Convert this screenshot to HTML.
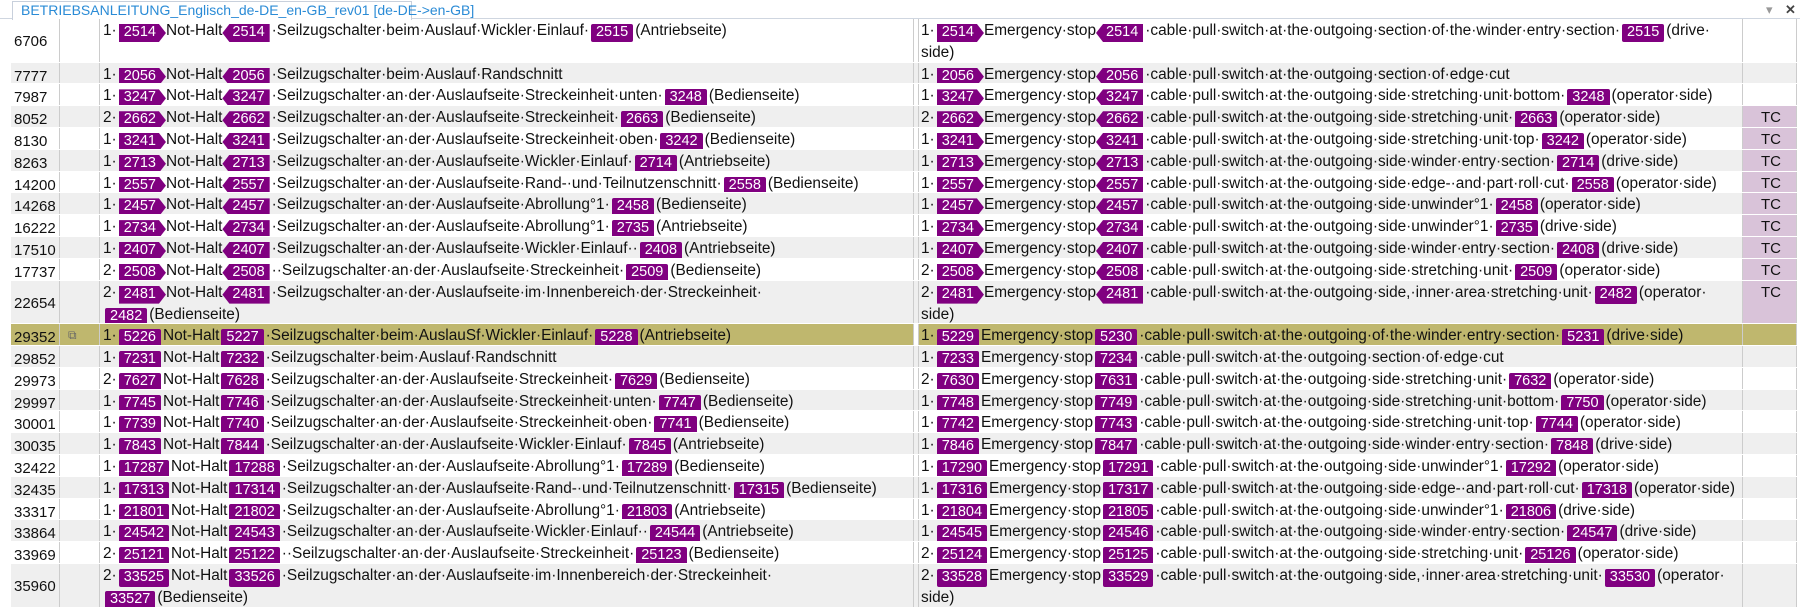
<!DOCTYPE html>
<html><head><meta charset="utf-8"><style>
*{margin:0;padding:0;box-sizing:border-box}
body{width:1800px;height:613px;overflow:hidden;background:#fff;font-family:"Liberation Sans",sans-serif;font-size:15px;color:#111;position:relative}
.tabbar{position:absolute;left:0;top:0;width:1800px;height:19px;background:#fff;border-bottom:1px solid #cfd6e0}
.tab{position:absolute;left:12px;top:1px;height:19px;width:400px;white-space:nowrap;border:1px solid #c8d0dc;border-bottom:none;background:#fff;color:#2a8bd6;font-size:14px;line-height:17px;padding-left:8px}
.ctl{position:absolute;top:2px;font-size:13px;color:#444}
.grid{position:absolute;left:11px;top:19px;width:1786px}
.row{position:relative;display:flex;border-bottom:1px solid #fff}
.row.g{background:#efefef}
.row.hl .c{background:#bfb76e}
.c{position:relative;padding:1px 0 0 3px;line-height:21px;overflow:hidden;white-space:nowrap}
.id{width:49px;border-right:1px solid #ccc;padding-top:3px}
.ic{width:40px;border-right:1px solid #ccc}
.s{width:814px;padding-left:3px;border-right:1px solid #ccc;margin-right:4px}
.t{width:825px;border-left:1px solid #ccc;border-right:1px solid #ccc;padding-left:2px}
.tc{width:54px;text-align:center;border-right:1px solid #ccc}
.tc.p{background:#d9c3d9}
b{font-weight:normal;display:inline-block;background:#800080;color:#fff;font-size:14.5px;line-height:17px;height:18px;padding:0 5px;margin:0 2px;border-radius:2px;vertical-align:-1px}
b.a{padding-right:10px;margin-right:0;clip-path:polygon(0 0,calc(100% - 7px) 0,100% 50%,calc(100% - 7px) 100%,0 100%);border-radius:0}
b.e{padding-left:10px;margin-left:0;clip-path:polygon(7px 0,100% 0,100% 100%,7px 100%,0 50%);border-radius:0}
.d1{height:21.8px}.d2{height:43.6px}
.s,.t{font-size:15.4px}
</style></head><body>
<div class="tabbar"><div class="tab">BETRIEBSANLEITUNG_Englisch_de-DE_en-GB_rev01 [de-DE-&gt;en-GB]</div>
<span class="ctl" style="left:1766px;color:#999">▾</span><span class="ctl" style="left:1785px;font-weight:bold">✕</span></div>
<div class="grid">
<div class="row d2"><div class="c id" style="padding-top:12px">6706</div><div class="c ic"></div><div class="c s">1·<b class="a">2514</b>Not-Halt<b class="e">2514</b>·Seilzugschalter·beim·Auslauf·Wickler·Einlauf·<b>2515</b>(Antriebseite)</div><div class="c t">1·<b class="a">2514</b>Emergency·stop<b class="e">2514</b>·cable·pull·switch·at·the·outgoing·section·of·the·winder·entry·section·<b>2515</b>(drive·<br>side)</div><div class="c tc"></div></div>
<div class="row d1 g"><div class="c id">7777</div><div class="c ic"></div><div class="c s">1·<b class="a">2056</b>Not-Halt<b class="e">2056</b>·Seilzugschalter·beim·Auslauf·Randschnitt</div><div class="c t">1·<b class="a">2056</b>Emergency·stop<b class="e">2056</b>·cable·pull·switch·at·the·outgoing·section·of·edge·cut</div><div class="c tc"></div></div>
<div class="row d1"><div class="c id">7987</div><div class="c ic"></div><div class="c s">1·<b class="a">3247</b>Not-Halt<b class="e">3247</b>·Seilzugschalter·an·der·Auslaufseite·Streckeinheit·unten·<b>3248</b>(Bedienseite)</div><div class="c t">1·<b class="a">3247</b>Emergency·stop<b class="e">3247</b>·cable·pull·switch·at·the·outgoing·side·stretching·unit·bottom·<b>3248</b>(operator·side)</div><div class="c tc"></div></div>
<div class="row d1 g"><div class="c id">8052</div><div class="c ic"></div><div class="c s">2·<b class="a">2662</b>Not-Halt<b class="e">2662</b>·Seilzugschalter·an·der·Auslaufseite·Streckeinheit·<b>2663</b>(Bedienseite)</div><div class="c t">2·<b class="a">2662</b>Emergency·stop<b class="e">2662</b>·cable·pull·switch·at·the·outgoing·side·stretching·unit·<b>2663</b>(operator·side)</div><div class="c tc p">TC</div></div>
<div class="row d1"><div class="c id">8130</div><div class="c ic"></div><div class="c s">1·<b class="a">3241</b>Not-Halt<b class="e">3241</b>·Seilzugschalter·an·der·Auslaufseite·Streckeinheit·oben·<b>3242</b>(Bedienseite)</div><div class="c t">1·<b class="a">3241</b>Emergency·stop<b class="e">3241</b>·cable·pull·switch·at·the·outgoing·side·stretching·unit·top·<b>3242</b>(operator·side)</div><div class="c tc p">TC</div></div>
<div class="row d1 g"><div class="c id">8263</div><div class="c ic"></div><div class="c s">1·<b class="a">2713</b>Not-Halt<b class="e">2713</b>·Seilzugschalter·an·der·Auslaufseite·Wickler·Einlauf·<b>2714</b>(Antriebseite)</div><div class="c t">1·<b class="a">2713</b>Emergency·stop<b class="e">2713</b>·cable·pull·switch·at·the·outgoing·side·winder·entry·section·<b>2714</b>(drive·side)</div><div class="c tc p">TC</div></div>
<div class="row d1"><div class="c id">14200</div><div class="c ic"></div><div class="c s">1·<b class="a">2557</b>Not-Halt<b class="e">2557</b>·Seilzugschalter·an·der·Auslaufseite·Rand-·und·Teilnutzenschnitt·<b>2558</b>(Bedienseite)</div><div class="c t">1·<b class="a">2557</b>Emergency·stop<b class="e">2557</b>·cable·pull·switch·at·the·outgoing·side·edge-·and·part·roll·cut·<b>2558</b>(operator·side)</div><div class="c tc p">TC</div></div>
<div class="row d1 g"><div class="c id">14268</div><div class="c ic"></div><div class="c s">1·<b class="a">2457</b>Not-Halt<b class="e">2457</b>·Seilzugschalter·an·der·Auslaufseite·Abrollung°1·<b>2458</b>(Bedienseite)</div><div class="c t">1·<b class="a">2457</b>Emergency·stop<b class="e">2457</b>·cable·pull·switch·at·the·outgoing·side·unwinder°1·<b>2458</b>(operator·side)</div><div class="c tc p">TC</div></div>
<div class="row d1"><div class="c id">16222</div><div class="c ic"></div><div class="c s">1·<b class="a">2734</b>Not-Halt<b class="e">2734</b>·Seilzugschalter·an·der·Auslaufseite·Abrollung°1·<b>2735</b>(Antriebseite)</div><div class="c t">1·<b class="a">2734</b>Emergency·stop<b class="e">2734</b>·cable·pull·switch·at·the·outgoing·side·unwinder°1·<b>2735</b>(drive·side)</div><div class="c tc p">TC</div></div>
<div class="row d1 g"><div class="c id">17510</div><div class="c ic"></div><div class="c s">1·<b class="a">2407</b>Not-Halt<b class="e">2407</b>·Seilzugschalter·an·der·Auslaufseite·Wickler·Einlauf··<b>2408</b>(Antriebseite)</div><div class="c t">1·<b class="a">2407</b>Emergency·stop<b class="e">2407</b>·cable·pull·switch·at·the·outgoing·side·winder·entry·section·<b>2408</b>(drive·side)</div><div class="c tc p">TC</div></div>
<div class="row d1"><div class="c id">17737</div><div class="c ic"></div><div class="c s">2·<b class="a">2508</b>Not-Halt<b class="e">2508</b>··Seilzugschalter·an·der·Auslaufseite·Streckeinheit·<b>2509</b>(Bedienseite)</div><div class="c t">2·<b class="a">2508</b>Emergency·stop<b class="e">2508</b>·cable·pull·switch·at·the·outgoing·side·stretching·unit·<b>2509</b>(operator·side)</div><div class="c tc p">TC</div></div>
<div class="row d2 g"><div class="c id" style="padding-top:12px">22654</div><div class="c ic"></div><div class="c s">2·<b class="a">2481</b>Not-Halt<b class="e">2481</b>·Seilzugschalter·an·der·Auslaufseite·im·Innenbereich·der·Streckeinheit·<br><b>2482</b>(Bedienseite)</div><div class="c t">2·<b class="a">2481</b>Emergency·stop<b class="e">2481</b>·cable·pull·switch·at·the·outgoing·side,·inner·area·stretching·unit·<b>2482</b>(operator·<br>side)</div><div class="c tc p">TC</div></div>
<div class="row d1 hl"><div class="c id">29352</div><div class="c ic" style="color:#666;font-size:12px;padding-left:8px">⧉</div><div class="c s">1·<b>5226</b>Not-Halt<b>5227</b>·Seilzugschalter·beim·AuslauSf·Wickler·Einlauf·<b>5228</b>(Antriebseite)</div><div class="c t">1·<b>5229</b>Emergency·stop<b>5230</b>·cable·pull·switch·at·the·outgoing·of·the·winder·entry·section·<b>5231</b>(drive·side)</div><div class="c tc"></div></div>
<div class="row d1 g"><div class="c id">29852</div><div class="c ic"></div><div class="c s">1·<b>7231</b>Not-Halt<b>7232</b>·Seilzugschalter·beim·Auslauf·Randschnitt</div><div class="c t">1·<b>7233</b>Emergency·stop<b>7234</b>·cable·pull·switch·at·the·outgoing·section·of·edge·cut</div><div class="c tc"></div></div>
<div class="row d1"><div class="c id">29973</div><div class="c ic"></div><div class="c s">2·<b>7627</b>Not-Halt<b>7628</b>·Seilzugschalter·an·der·Auslaufseite·Streckeinheit·<b>7629</b>(Bedienseite)</div><div class="c t">2·<b>7630</b>Emergency·stop<b>7631</b>·cable·pull·switch·at·the·outgoing·side·stretching·unit·<b>7632</b>(operator·side)</div><div class="c tc"></div></div>
<div class="row d1 g"><div class="c id">29997</div><div class="c ic"></div><div class="c s">1·<b>7745</b>Not-Halt<b>7746</b>·Seilzugschalter·an·der·Auslaufseite·Streckeinheit·unten·<b>7747</b>(Bedienseite)</div><div class="c t">1·<b>7748</b>Emergency·stop<b>7749</b>·cable·pull·switch·at·the·outgoing·side·stretching·unit·bottom·<b>7750</b>(operator·side)</div><div class="c tc"></div></div>
<div class="row d1"><div class="c id">30001</div><div class="c ic"></div><div class="c s">1·<b>7739</b>Not-Halt<b>7740</b>·Seilzugschalter·an·der·Auslaufseite·Streckeinheit·oben·<b>7741</b>(Bedienseite)</div><div class="c t">1·<b>7742</b>Emergency·stop<b>7743</b>·cable·pull·switch·at·the·outgoing·side·stretching·unit·top·<b>7744</b>(operator·side)</div><div class="c tc"></div></div>
<div class="row d1 g"><div class="c id">30035</div><div class="c ic"></div><div class="c s">1·<b>7843</b>Not-Halt<b>7844</b>·Seilzugschalter·an·der·Auslaufseite·Wickler·Einlauf·<b>7845</b>(Antriebseite)</div><div class="c t">1·<b>7846</b>Emergency·stop<b>7847</b>·cable·pull·switch·at·the·outgoing·side·winder·entry·section·<b>7848</b>(drive·side)</div><div class="c tc"></div></div>
<div class="row d1"><div class="c id">32422</div><div class="c ic"></div><div class="c s">1·<b>17287</b>Not-Halt<b>17288</b>·Seilzugschalter·an·der·Auslaufseite·Abrollung°1·<b>17289</b>(Bedienseite)</div><div class="c t">1·<b>17290</b>Emergency·stop<b>17291</b>·cable·pull·switch·at·the·outgoing·side·unwinder°1·<b>17292</b>(operator·side)</div><div class="c tc"></div></div>
<div class="row d1 g"><div class="c id">32435</div><div class="c ic"></div><div class="c s">1·<b>17313</b>Not-Halt<b>17314</b>·Seilzugschalter·an·der·Auslaufseite·Rand-·und·Teilnutzenschnitt·<b>17315</b>(Bedienseite)</div><div class="c t">1·<b>17316</b>Emergency·stop<b>17317</b>·cable·pull·switch·at·the·outgoing·side·edge-·and·part·roll·cut·<b>17318</b>(operator·side)</div><div class="c tc"></div></div>
<div class="row d1"><div class="c id">33317</div><div class="c ic"></div><div class="c s">1·<b>21801</b>Not-Halt<b>21802</b>·Seilzugschalter·an·der·Auslaufseite·Abrollung°1·<b>21803</b>(Antriebseite)</div><div class="c t">1·<b>21804</b>Emergency·stop<b>21805</b>·cable·pull·switch·at·the·outgoing·side·unwinder°1·<b>21806</b>(drive·side)</div><div class="c tc"></div></div>
<div class="row d1 g"><div class="c id">33864</div><div class="c ic"></div><div class="c s">1·<b>24542</b>Not-Halt<b>24543</b>·Seilzugschalter·an·der·Auslaufseite·Wickler·Einlauf··<b>24544</b>(Antriebseite)</div><div class="c t">1·<b>24545</b>Emergency·stop<b>24546</b>·cable·pull·switch·at·the·outgoing·side·winder·entry·section·<b>24547</b>(drive·side)</div><div class="c tc"></div></div>
<div class="row d1"><div class="c id">33969</div><div class="c ic"></div><div class="c s">2·<b>25121</b>Not-Halt<b>25122</b>··Seilzugschalter·an·der·Auslaufseite·Streckeinheit·<b>25123</b>(Bedienseite)</div><div class="c t">2·<b>25124</b>Emergency·stop<b>25125</b>·cable·pull·switch·at·the·outgoing·side·stretching·unit·<b>25126</b>(operator·side)</div><div class="c tc"></div></div>
<div class="row d2 g"><div class="c id" style="padding-top:12px">35960</div><div class="c ic"></div><div class="c s">2·<b>33525</b>Not-Halt<b>33526</b>·Seilzugschalter·an·der·Auslaufseite·im·Innenbereich·der·Streckeinheit·<br><b>33527</b>(Bedienseite)</div><div class="c t">2·<b>33528</b>Emergency·stop<b>33529</b>·cable·pull·switch·at·the·outgoing·side,·inner·area·stretching·unit·<b>33530</b>(operator·<br>side)</div><div class="c tc"></div></div>
</div>
</body></html>
